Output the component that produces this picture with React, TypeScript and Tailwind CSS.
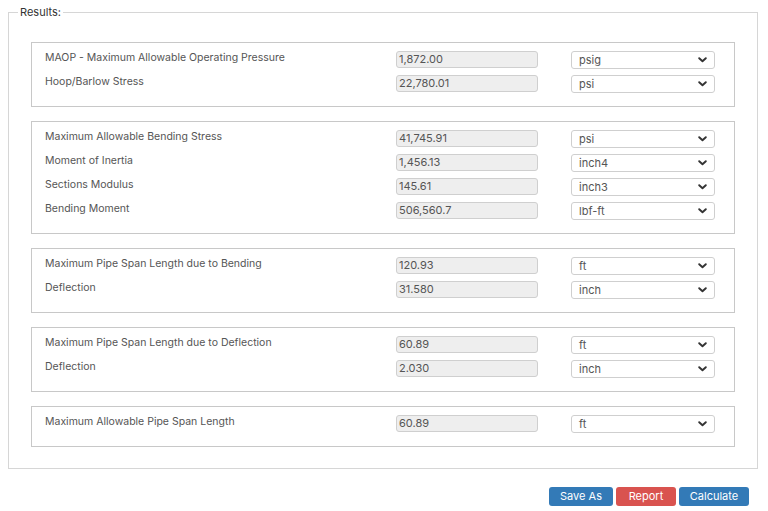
import React from "react";

type Row = { label: string; value: string; unit: string };

const groups: Row[][] = [
  [
    { label: "MAOP - Maximum Allowable Operating Pressure", value: "1,872.00", unit: "psig" },
    { label: "Hoop/Barlow Stress", value: "22,780.01", unit: "psi" },
  ],
  [
    { label: "Maximum Allowable Bending Stress", value: "41,745.91", unit: "psi" },
    { label: "Moment of Inertia", value: "1,456.13", unit: "inch4" },
    { label: "Sections Modulus", value: "145.61", unit: "inch3" },
    { label: "Bending Moment", value: "506,560.7", unit: "lbf-ft" },
  ],
  [
    { label: "Maximum Pipe Span Length due to Bending", value: "120.93", unit: "ft" },
    { label: "Deflection", value: "31.580", unit: "inch" },
  ],
  [
    { label: "Maximum Pipe Span Length due to Deflection", value: "60.89", unit: "ft" },
    { label: "Deflection", value: "2.030", unit: "inch" },
  ],
  [{ label: "Maximum Allowable Pipe Span Length", value: "60.89", unit: "ft" }],
];

function Chevron() {
  return (
    <svg width="9" height="6" viewBox="0 0 9 6" className="shrink-0">
      <polyline points="1.2,1.2 4.5,4.3 7.8,1.2" fill="none" stroke="#333" strokeWidth="1.9" strokeLinecap="round" strokeLinejoin="round" />
    </svg>
  );
}

function ResultRow({ r }: { r: Row }) {
  return (
    <div className="flex items-start h-[17px]">
      <div className="w-[351px] text-[10.5px] leading-[14px] text-[#555]">{r.label}</div>
      <div className="w-[142px] h-[17px] rounded-[3px] border border-[#cfcfcf] bg-[#eeeeee] pl-[2px] text-[11px] leading-[15px] text-[#555] flex items-center">
        {r.value}
      </div>
      <div className="ml-[33px] w-[144px] h-[18px] rounded-[3px] border border-[#cfcfcf] bg-white pl-[7px] pr-[7px] text-[11px] text-[#555] flex items-center justify-between">
        <span className="leading-[14px]">{r.unit}</span>
        <Chevron />
      </div>
    </div>
  );
}

export default function App() {
  return (
    <div
      className="w-[768px] h-[511px] bg-white overflow-hidden"
      style={{ fontFamily: "Inter, 'Noto Sans', sans-serif" }}
    >
      <div className="pt-[5px] pl-[8px] pr-[10px]">
        <fieldset className="border border-[#d6d6d6] pt-[23px] pb-[21px] px-[22px]">
          <legend className="-ml-[13px] px-[2px] text-[11px] leading-[14px] text-[#333]">Results:</legend>
          <div className="flex flex-col gap-[14px]">
            {groups.map((g, i) => (
              <div key={i} className="border border-[#c8c8c8] pt-[8px] pb-[14px] pl-[13px] flex flex-col gap-[7px]">
                {g.map((r, j) => (
                  <ResultRow key={j} r={r} />
                ))}
              </div>
            ))}
          </div>
        </fieldset>
        <div className="flex justify-end gap-[3px] mt-[18px] pr-[9px]">
          <button className="w-[64px] h-[19px] rounded-[3px] bg-[#337ab7] text-white text-[11px] leading-[19px]">Save As</button>
          <button className="w-[60px] h-[19px] rounded-[3px] bg-[#d9534f] text-white text-[11px] leading-[19px]">Report</button>
          <button className="w-[70px] h-[19px] rounded-[3px] bg-[#337ab7] text-white text-[11px] leading-[19px]">Calculate</button>
        </div>
      </div>
    </div>
  );
}
